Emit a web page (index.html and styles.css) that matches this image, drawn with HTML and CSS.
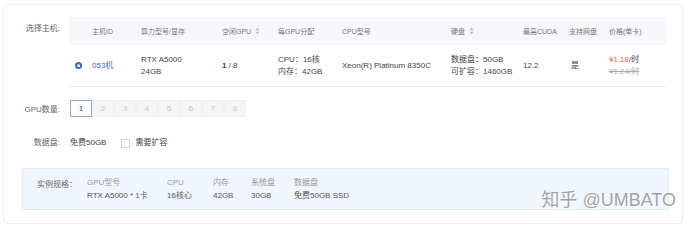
FILE: index.html
```html
<!DOCTYPE html>
<html lang="zh-CN">
<head>
  <meta charset="UTF-8">
  <title>选择主机</title>
  <link rel="stylesheet" href="styles.css">
</head>
<body>
  <div class="card">
    <div class="form-row host-row">
      <div class="label">选择主机:</div>
      <div class="host-table">
        <div class="t-head">
          <div></div>
          <div>主机ID</div>
          <div>算力型号/显存</div>
          <div>空闲GPU <svg class="sort" viewBox="0 0 6 9" width="5" height="8"><path d="M3 0.5L5.5 3.5H0.5Z M3 8.5L5.5 5.5H0.5Z" fill="#b5b9c2"/></svg></div>
          <div>每GPU分配</div>
          <div>CPU型号</div>
          <div>硬盘 <svg class="sort" viewBox="0 0 6 9" width="5" height="8"><path d="M3 0.5L5.5 3.5H0.5Z M3 8.5L5.5 5.5H0.5Z" fill="#b5b9c2"/></svg></div>
          <div>最高CUDA</div>
          <div>支持网盘</div>
          <div>价格(单卡)</div>
        </div>
        <div class="t-row">
          <div><span class="radio"></span></div>
          <div class="host-id">053机</div>
          <div>RTX A5000<br>24GB</div>
          <div><b>1</b> / 8</div>
          <div>CPU：16核<br>内存：42GB</div>
          <div>Xeon(R) Platinum 8350C</div>
          <div>数据盘：50GB<br>可扩容：1460GB</div>
          <div>12.2</div>
          <div class="pad2">是</div>
          <div><span class="price">¥1.18</span>/时<br><span class="old-price">¥1.24/时</span></div>
        </div>
      </div>
    </div>

    <div class="form-row gpu-row">
      <div class="label">GPU数量:</div>
      <div class="gpu-nums">
        <span class="num active">1</span>
        <span class="num">2</span>
        <span class="num">3</span>
        <span class="num">4</span>
        <span class="num">5</span>
        <span class="num">6</span>
        <span class="num">7</span>
        <span class="num">8</span>
      </div>
    </div>

    <div class="form-row disk-row">
      <div class="label">数据盘:</div>
      <div class="disk">
        <span>免费50GB</span>
        <span class="check"></span>
        <span>需要扩容</span>
      </div>
    </div>

    <div class="spec">
      <div class="spec-label">实例规格：</div>
      <div class="spec-col w1"><span class="k">GPU型号</span><span>RTX A5000 * 1卡</span></div>
      <div class="spec-col w2"><span class="k">CPU</span><span>16核心</span></div>
      <div class="spec-col w3"><span class="k">内存</span><span>42GB</span></div>
      <div class="spec-col w4"><span class="k">系统盘</span><span>30GB</span></div>
      <div class="spec-col"><span class="k">数据盘</span><span>免费50GB SSD</span></div>
    </div>

    <div class="watermark">知乎 @UMBATO</div>
  </div>
</body>
</html>
```

FILE: styles.css
```css
body {
  margin: 0;
  font-family: 'Liberation Sans', 'Noto Sans CJK SC', sans-serif;
  font-size: 8px;
  color: #444;
  background: #fff;
}

.card {
  position: relative;
  margin: 4px 9px 0 3px;
  height: 220px;
  box-sizing: border-box;
  border: 1px solid #ebeef5;
  border-radius: 4px;
  padding-top: 12px;
}

.form-row {
  display: flex;
}

.label {
  width: 56px;
  text-align: right;
  color: #666;
  margin-right: 9px;
  flex-shrink: 0;
}

.host-row .label {
  padding-top: 5px;
}

.host-table {
  width: 597px;
}

.t-head, .t-row {
  display: grid;
  grid-template-columns: 23px 49px 81px 56px 64px 109px 72px 46px 40px 57px;
  align-items: center;
}

.t-head {
  height: 28px;
  background: #f5f7fa;
  color: #777;
  font-size: 7px;
}

.sort {
  vertical-align: -1px;
  margin-left: 2px;
}

.t-row {
  height: 41px;
  border-bottom: 1px solid #ebeef5;
  line-height: 12px;
  color: #444;
}

.radio {
  display: block;
  width: 7px;
  height: 7px;
  margin-left: 6px;
  border-radius: 50%;
  background: #3c63c8;
  box-sizing: border-box;
  border: 2px solid #3c63c8;
  box-shadow: inset 0 0 0 1px #fff;
  position: relative;
}

.radio::after {
  content: '';
  position: absolute;
  left: 0.5px;
  top: 0.5px;
  width: 2px;
  height: 2px;
  border-radius: 50%;
  background: #fff;
}

.host-id {
  color: #3a6ad6;
}

.pad2 {
  padding-left: 2px;
}

.price {
  color: #f0605a;
}

.old-price {
  color: #aaa;
  text-decoration: line-through;
}

.gpu-row {
  margin-top: 13px;
  align-items: center;
}

.gpu-row .label {
  margin-right: 10px;
}

.gpu-nums {
  display: flex;
  background: #f5f5f5;
}

.num {
  width: 22px;
  height: 17px;
  box-sizing: border-box;
  border: 1px solid #f0f0f0;
  color: #c4c7cc;
  text-align: center;
  line-height: 15px;
}

.num.active {
  background: #fff;
  border-color: #9aa9c6;
  color: #444;
}

.disk-row {
  margin-top: 19px;
  line-height: 14px;
}

.disk-row .label {
  margin-right: 10px;
}

.disk {
  display: flex;
  align-items: center;
}

.check {
  width: 7px;
  height: 7px;
  border: 1px solid #d4d4d4;
  margin: 0 5px 0 15px;
}

.spec {
  display: flex;
  align-items: center;
  margin: 18px 13px 0 18px;
  height: 42px;
  box-sizing: border-box;
  padding-left: 14px;
  background: #f0f6fe;
  border: 1px solid #e2ebf7;
  color: #555;
}

.spec-label {
  width: 50px;
  color: #666;
  align-self: flex-start;
  padding-top: 9px;
}

.spec-col {
  display: flex;
  flex-direction: column;
  line-height: 13px;
}

.spec-col .k {
  color: #999;
}

.w1 { width: 80px; }
.w2 { width: 46px; }
.w3 { width: 38px; }
.w4 { width: 43px; }

.watermark {
  position: absolute;
  right: 6px;
  bottom: 12px;
  font-size: 18px;
  color: #a3a3a3;
  text-shadow: 0 0 1px #fff, 1px 1px 0 #fff;
}
```
